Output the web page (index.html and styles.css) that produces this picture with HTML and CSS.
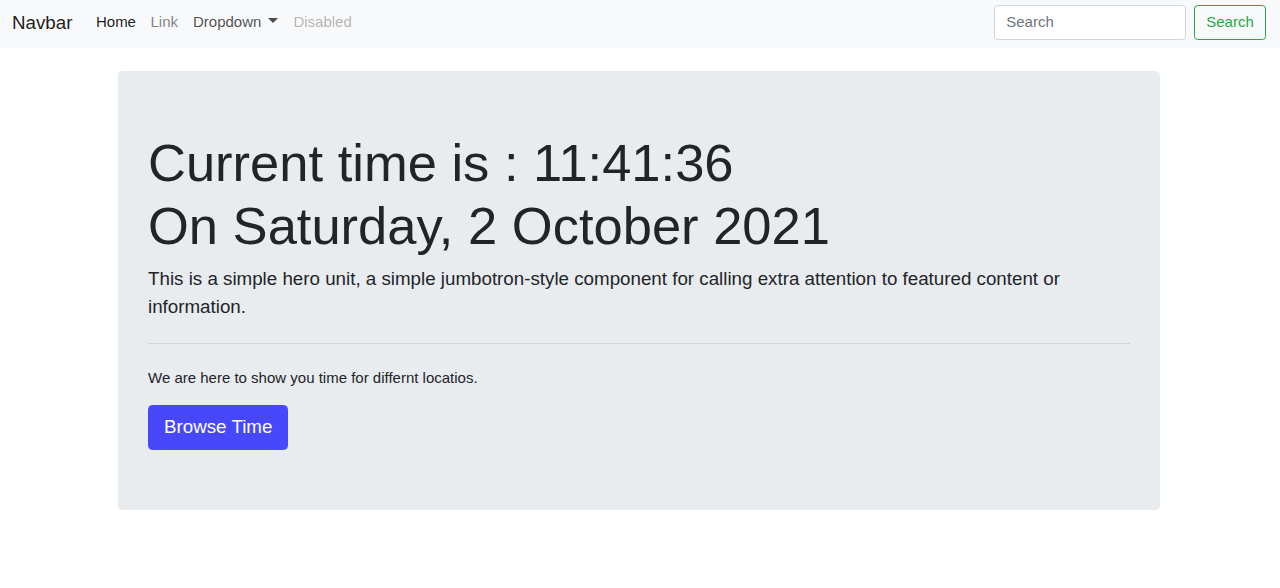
FILE: index.html
```html
<!DOCTYPE html>
<html lang="en">
<head>
<meta charset="utf-8">
<title>Current time</title>
<link rel="stylesheet" href="styles.css">
</head>
<body>
<nav class="navbar">
  <a class="brand" href="#">Navbar</a>
  <ul class="nav">
    <li><a class="nav-link active" href="#">Home</a></li>
    <li><a class="nav-link" href="#">Link</a></li>
    <li><a class="nav-link dropdown" href="#">Dropdown<span class="caret"></span></a></li>
    <li><a class="nav-link disabled" href="#">Disabled</a></li>
  </ul>
  <form class="search-form">
    <input class="search-input" type="search" placeholder="Search">
    <button class="search-btn" type="button">Search</button>
  </form>
</nav>
<main class="jumbotron">
  <h1 class="display">Current time is : 11:41:36<br>On Saturday, 2 October 2021</h1>
  <p class="lead">This is a simple hero unit, a simple jumbotron-style component for calling extra attention to featured content or information.</p>
  <hr class="divider">
  <p class="note">We are here to show you time for differnt locatios.</p>
  <a class="btn-primary" href="#">Browse Time</a>
</main>
</body>
</html>
```
FILE: styles.css
```css
* { box-sizing: border-box; }
html, body {
  margin: 0;
  padding: 0;
  background: #fff;
  font-family: "Liberation Sans", Arial, sans-serif;
  color: #212529;
  font-size: 15px;
  line-height: 1.5;
}
a { text-decoration: none; }

.navbar {
  height: 48px;
  background: #f8f9fa;
  display: flex;
  align-items: center;
  padding: 5px 14px 8px 12px;
}
.brand {
  font-size: 18.75px;
  line-height: 28px;
  color: rgba(0,0,0,.9);
  margin-right: 16px;
}
.nav {
  list-style: none;
  margin: 0;
  padding: 0;
  display: flex;
  flex: 1;
}
.nav-link {
  display: block;
  padding: 7.5px 7.5px;
  font-size: 15px;
  line-height: 22.5px;
  color: rgba(0,0,0,.5);
}
.nav-link.active { color: rgba(0,0,0,.9); padding-right: 7px; }
.nav-link.dropdown { color: rgba(0,0,0,.7); }
.nav-link.disabled { color: rgba(0,0,0,.3); }
.caret {
  display: inline-block;
  margin-left: 7px;
  vertical-align: 4px;
  border-top: 5px solid currentColor;
  border-left: 5px solid transparent;
  border-right: 5px solid transparent;
}
.search-form {
  display: flex;
  align-items: center;
}
.search-input {
  width: 192px;
  height: 35px;
  margin-right: 8px;
  padding: 4px 11.25px 6px;
  font-family: inherit;
  font-size: 15px;
  color: #495057;
  background: #fff;
  border: 1px solid #ced4da;
  border-radius: 3.75px;
  outline: none;
}
.search-input::placeholder { color: #6c757d; }
.search-btn {
  height: 35px;
  padding: 0 11.25px 2px;
  font-family: inherit;
  font-size: 15px;
  color: #28a745;
  background: transparent;
  border: 1px solid #28a745;
  border-radius: 3.75px;
}

.jumbotron {
  display: block;
  width: 1042px;
  margin: 23px 0 0 118px;
  padding: 60px 30px 60px;
  background: #e9ecef;
  border-radius: 4.5px;
}
.display {
  margin: 0 0 7.5px;
  font-size: 52.5px;
  line-height: 63px;
  font-weight: 300;
}
.lead {
  margin: 0 0 15px;
  font-size: 18.75px;
  line-height: 28.125px;
  font-weight: 300;
}
.divider {
  margin: 22.5px 0;
  border: 0;
  border-top: 1px solid rgba(0,0,0,.1);
}
.note {
  margin: 0 0 15.5px;
  font-size: 15px;
  line-height: 22.5px;
}
.btn-primary {
  display: inline-block;
  padding: 7.5px 15px;
  font-size: 18.75px;
  line-height: 28.5px;
  color: #fff;
  background: #4747fb;
  border: 1px solid #4747fb;
  border-radius: 4.5px;
  vertical-align: top;
}
```
